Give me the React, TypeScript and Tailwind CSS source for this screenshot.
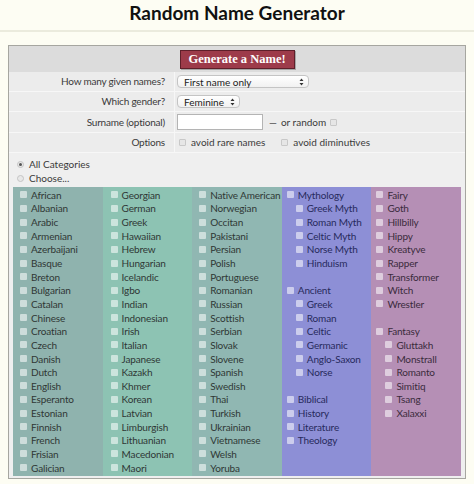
import type { ReactNode } from 'react'

const FONT = { fontFamily: 'Lato, "Open Sans", sans-serif' }

type Item = { label: string; sub?: boolean } | null

const COL_1: Item[] = [
  'African', 'Albanian', 'Arabic', 'Armenian', 'Azerbaijani', 'Basque', 'Breton',
  'Bulgarian', 'Catalan', 'Chinese', 'Croatian', 'Czech', 'Danish', 'Dutch', 'English',
  'Esperanto', 'Estonian', 'Finnish', 'French', 'Frisian', 'Galician',
].map((label) => ({ label }))

const COL_2: Item[] = [
  'Georgian', 'German', 'Greek', 'Hawaiian', 'Hebrew', 'Hungarian', 'Icelandic', 'Igbo',
  'Indian', 'Indonesian', 'Irish', 'Italian', 'Japanese', 'Kazakh', 'Khmer', 'Korean',
  'Latvian', 'Limburgish', 'Lithuanian', 'Macedonian', 'Maori',
].map((label) => ({ label }))

const COL_3: Item[] = [
  'Native American', 'Norwegian', 'Occitan', 'Pakistani', 'Persian', 'Polish',
  'Portuguese', 'Romanian', 'Russian', 'Scottish', 'Serbian', 'Slovak', 'Slovene',
  'Spanish', 'Swedish', 'Thai', 'Turkish', 'Ukrainian', 'Vietnamese', 'Welsh', 'Yoruba',
].map((label) => ({ label }))

const COL_4: Item[] = [
  { label: 'Mythology' },
  { label: 'Greek Myth', sub: true },
  { label: 'Roman Myth', sub: true },
  { label: 'Celtic Myth', sub: true },
  { label: 'Norse Myth', sub: true },
  { label: 'Hinduism', sub: true },
  null,
  { label: 'Ancient' },
  { label: 'Greek', sub: true },
  { label: 'Roman', sub: true },
  { label: 'Celtic', sub: true },
  { label: 'Germanic', sub: true },
  { label: 'Anglo-Saxon', sub: true },
  { label: 'Norse', sub: true },
  null,
  { label: 'Biblical' },
  { label: 'History' },
  { label: 'Literature' },
  { label: 'Theology' },
]

const COL_5: Item[] = [
  { label: 'Fairy' },
  { label: 'Goth' },
  { label: 'Hillbilly' },
  { label: 'Hippy' },
  { label: 'Kreatyve' },
  { label: 'Rapper' },
  { label: 'Transformer' },
  { label: 'Witch' },
  { label: 'Wrestler' },
  null,
  { label: 'Fantasy' },
  { label: 'Gluttakh', sub: true },
  { label: 'Monstrall', sub: true },
  { label: 'Romanto', sub: true },
  { label: 'Simitiq', sub: true },
  { label: 'Tsang', sub: true },
  { label: 'Xalaxxi', sub: true },
]

// faded square used inside the coloured category columns
function ListBox() {
  return <span className="inline-block h-[7px] w-[7px] shrink-0 rounded-[1px] bg-white/55" />
}

// checkbox used in the gray form area
function Box() {
  return (
    <span className="inline-block h-[7px] w-[7px] shrink-0 rounded-[1px] border border-[#c8c8c8] bg-[#e6e6e6]" />
  )
}

function SelectBox({ value, width }: { value: string; width: string }) {
  return (
    <div
      className={`flex h-[13px] items-center justify-between rounded-[4px] border border-[#c4c4c4] bg-gradient-to-b from-white to-[#f1f1f1] pl-[6px] pr-[4px] text-[10px] text-[#222] ${width}`}
    >
      <span className="leading-none">{value}</span>
      <svg width="5" height="8" viewBox="0 0 5 8" aria-hidden>
        <path d="M2.5 0.5 L4.5 3 L0.5 3 Z M2.5 7.5 L4.5 5 L0.5 5 Z" fill="#333" />
      </svg>
    </div>
  )
}

function FormRow({ label, h, children }: { label: string; h: string; children: ReactNode }) {
  return (
    <div className={`flex border-b border-[#f7f7f7] bg-[#ececec] ${h}`}>
      <div className="flex w-[166px] items-center justify-end border-r border-[#f7f7f7] pr-[9px] text-[10px] tracking-[-0.2px] text-[#3a3a3a]">
        {label}
      </div>
      <div className="flex items-center pl-[2px] text-[10px] text-[#3a3a3a]">{children}</div>
    </div>
  )
}

function Column({ items, bg, text, pad }: { items: Item[]; bg: string; text: string; pad: string }) {
  return (
    <div className={`flex flex-col pt-[1px] ${bg} ${pad} ${text}`}>
      {items.map((item, i) =>
        item ? (
          <div
            key={item.label}
            className={`flex h-[13.65px] items-center gap-[4px] whitespace-nowrap text-[10px] tracking-[-0.15px] ${
              item.sub ? 'pl-[9px]' : ''
            }`}
          >
            <ListBox />
            <span className="leading-none">{item.label}</span>
          </div>
        ) : (
          <div key={`gap-${i}`} className="h-[13.65px]" />
        ),
      )}
    </div>
  )
}

export default function App() {
  return (
    <div className="min-h-screen w-full bg-[#fdfdf3]" style={FONT}>
      <header className="flex h-[32px] items-start justify-center border-b-2 border-[#ebebdd]">
        <h1 className="flex h-[27px] items-center text-[19px] font-bold text-[#111]">
          Random Name Generator
        </h1>
      </header>

      <div className="mx-[8px] mt-[13px] border border-[#a6a6a0] bg-[#efefef] pb-[2px]">
        <div className="flex h-[26px] items-center justify-center bg-[#dcdcdc]">
          <button
            className="h-[19px] w-[115px] border border-[#5e1f2a] bg-[#9d3b4a] text-[12.5px] font-bold leading-none text-white shadow-[1px_1px_0_rgba(0,0,0,0.25)]"
            style={{ fontFamily: '"Liberation Serif", serif' }}
          >
            Generate a Name!
          </button>
        </div>

        <FormRow label="How many given names?" h="h-[20px]">
          <SelectBox value="First name only" width="w-[132px]" />
        </FormRow>
        <FormRow label="Which gender?" h="h-[20px]">
          <SelectBox value="Feminine" width="w-[63px]" />
        </FormRow>
        <FormRow label="Surname (optional)" h="h-[21px]">
          <div className="h-[16px] w-[86px] border border-[#b4b4b4] bg-white" />
          <span className="ml-[6px]">—</span>
          <span className="ml-[4px]">or random</span>
          <span className="ml-[4px] flex">
            <Box />
          </span>
        </FormRow>
        <FormRow label="Options" h="h-[20px]">
          <span className="ml-[2px] flex">
            <Box />
          </span>
          <span className="ml-[5px]">avoid rare names</span>
          <span className="ml-[16px] flex">
            <Box />
          </span>
          <span className="ml-[5px]">avoid diminutives</span>
        </FormRow>

        <div className="flex flex-col pb-[2px] pl-[8px] pt-[4px] text-[10px] text-[#3a3a3a]">
          <div className="flex h-[14px] items-center gap-[5px]">
            <span className="flex h-[7px] w-[7px] items-center justify-center rounded-full border border-[#c4c4c4] bg-[#e8e8e8]">
              <span className="h-[3px] w-[3px] rounded-full bg-[#555]" />
            </span>
            All Categories
          </div>
          <div className="flex h-[14px] items-center gap-[5px]">
            <span className="h-[7px] w-[7px] rounded-full border border-[#c4c4c4] bg-[#e8e8e8]" />
            Choose...
          </div>
        </div>

        <div className="mx-[4px] grid h-[289px] grid-cols-5">
          <Column items={COL_1} bg="bg-[#8fb3ae]" text="text-[#2f3735]" pad="pl-[7px]" />
          <Column items={COL_2} bg="bg-[#8dc3b3]" text="text-[#2f3735]" pad="pl-[8px]" />
          <Column items={COL_3} bg="bg-[#90b7b2]" text="text-[#2f3735]" pad="pl-[7px]" />
          <Column items={COL_4} bg="bg-[#8d8fd6]" text="text-[#272a5c]" pad="pl-[5px]" />
          <Column items={COL_5} bg="bg-[#b58fb5]" text="text-[#3a2b3c]" pad="pl-[5px]" />
        </div>
      </div>
    </div>
  )
}
